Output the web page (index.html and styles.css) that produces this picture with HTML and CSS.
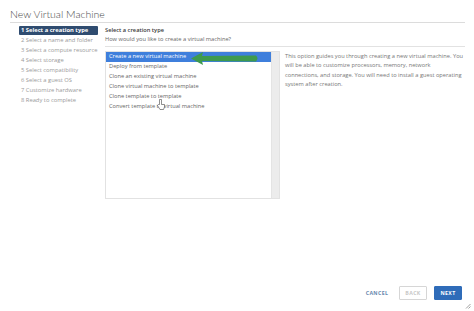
FILE: index.html
```html
<!doctype html>
<html>
<head>
<meta name="viewport" content="width=device-width">
<link rel="stylesheet" href="styles.css">
</head>
<body>
<div class="wizard">
  <div class="title">New Virtual Machine</div>
  <div class="main">
    <ul class="steps">
      <li class="on">1 Select a creation type</li>
      <li>2 Select a name and folder</li>
      <li>3 Select a compute resource</li>
      <li>4 Select storage</li>
      <li>5 Select compatibility</li>
      <li>6 Select a guest OS</li>
      <li>7 Customize hardware</li>
      <li>8 Ready to complete</li>
    </ul>
    <div class="page">
      <div class="head">
        <div class="h1">Select a creation type</div>
        <div class="h2">How would you like to create a virtual machine?</div>
      </div>
      <div class="panes">
        <div class="list">
          <div class="rows">
            <div class="row sel">Create a new virtual machine</div>
            <div class="row">Deploy from template</div>
            <div class="row">Clone an existing virtual machine</div>
            <div class="row">Clone virtual machine to template</div>
            <div class="row">Clone template to template</div>
            <div class="row">Convert template to virtual machine</div>
          </div>
          <div class="scroll"></div>
          <svg class="arrow" width="70" height="16" viewBox="0 0 70 16">
            <path d="M1 7.5 L13 1 L12 5 L66 4.6 Q69 7.5 66 10.4 L12 10 L13 14 Z" fill="#3e9a4e"/>
          </svg>
          <svg class="cursor" width="8" height="11" viewBox="0 0 8 11">
            <path d="M2.5 0.5 v5 h-1 l-1 1 l2.5 4 h3.5 l1-2.5 v-2.5 h-3 v-5 z" fill="#fff" stroke="#444" stroke-width="0.6"/>
          </svg>
        </div>
        <p class="desc">This option guides you through creating a new virtual machine. You will be able to customize processors, memory, network connections, and storage. You will need to install a guest operating system after creation.</p>
      </div>
    </div>
  </div>
  <div class="foot">
    <span class="btn link">CANCEL</span>
    <span class="btn off">BACK</span>
    <span class="btn go">NEXT</span>
  </div>
  <svg class="grip" width="6" height="6" viewBox="0 0 6 6">
    <path d="M5.5 1 L1 5.5 M5.5 3.5 L3.5 5.5" stroke="#888" stroke-width="0.8"/>
  </svg>
</div>
</body>
</html>
```
FILE: styles.css
```css
html,body{margin:0; padding:0; background:#fff}
body{font-family:"Open Sans", "Liberation Sans", sans-serif; color:#666}
.wizard{position:relative; width:474px; height:311px; display:flex; flex-direction:column; box-sizing:border-box}
.title{margin:0 9px 0 10px; padding:8px 0 1px; font-family:Lato, sans-serif; font-size:10.5px; font-weight:300; color:#4a4a4a; line-height:13px; border-bottom:1px solid #dcdcdc}
.main{flex:1; display:flex; padding-top:3px}
.steps{list-style:none; margin:0 0 0 19px; padding:0; width:79px; font-size:5.8px}
.steps li{height:10px; line-height:9px; padding-left:2px; color:#9a9a9a; white-space:nowrap}
.steps li.on{background:#2f4c70; color:#fff; font-weight:bold; height:9px; margin-bottom:1px; border-radius:1px}
.page{flex:1; margin:0 9px 0 7px; display:flex; flex-direction:column}
.head{border-bottom:1px solid #e2e2e2; padding-bottom:3px; font-size:5.7px; line-height:8.5px}
.h1{color:#3a3a3a; font-weight:600}
.h2{color:#686868}
.panes{display:flex; margin-top:4px; gap:5px}
.list{position:relative; width:175px; height:148px; border:1px solid #e2e2e2; box-sizing:border-box; display:flex}
.rows{flex:1; font-size:5.7px; color:#666}
.row{height:10px; line-height:9px; padding-left:3px; white-space:nowrap}
.row.sel{background:#3f7fdc; color:#fff}
.scroll{width:7px; background:#ececec; border-left:1px solid #e4e4e4}
.arrow{position:absolute; left:84px; top:-1px}
.cursor{position:absolute; left:51px; top:47px}
.desc{margin:0; flex:1; font-size:5.7px; line-height:9.4px; color:#777; padding-top:1px}
.foot{display:flex; justify-content:flex-end; align-items:center; gap:7px; padding:0 12px 11px 0}
.btn{display:block; width:28px; height:14px; box-sizing:border-box; line-height:12px; text-align:center; font-size:5.2px; font-weight:bold; letter-spacing:0.4px; border:1px solid transparent; border-radius:1px}
.link{color:#6787ad; width:30px}
.off{color:#c8c8c8; border-color:#d6d6d6}
.go{background:#2f6cb9; color:#fff; border-color:#2f6cb9}
.grip{position:absolute; right:3px; bottom:2px}
```
